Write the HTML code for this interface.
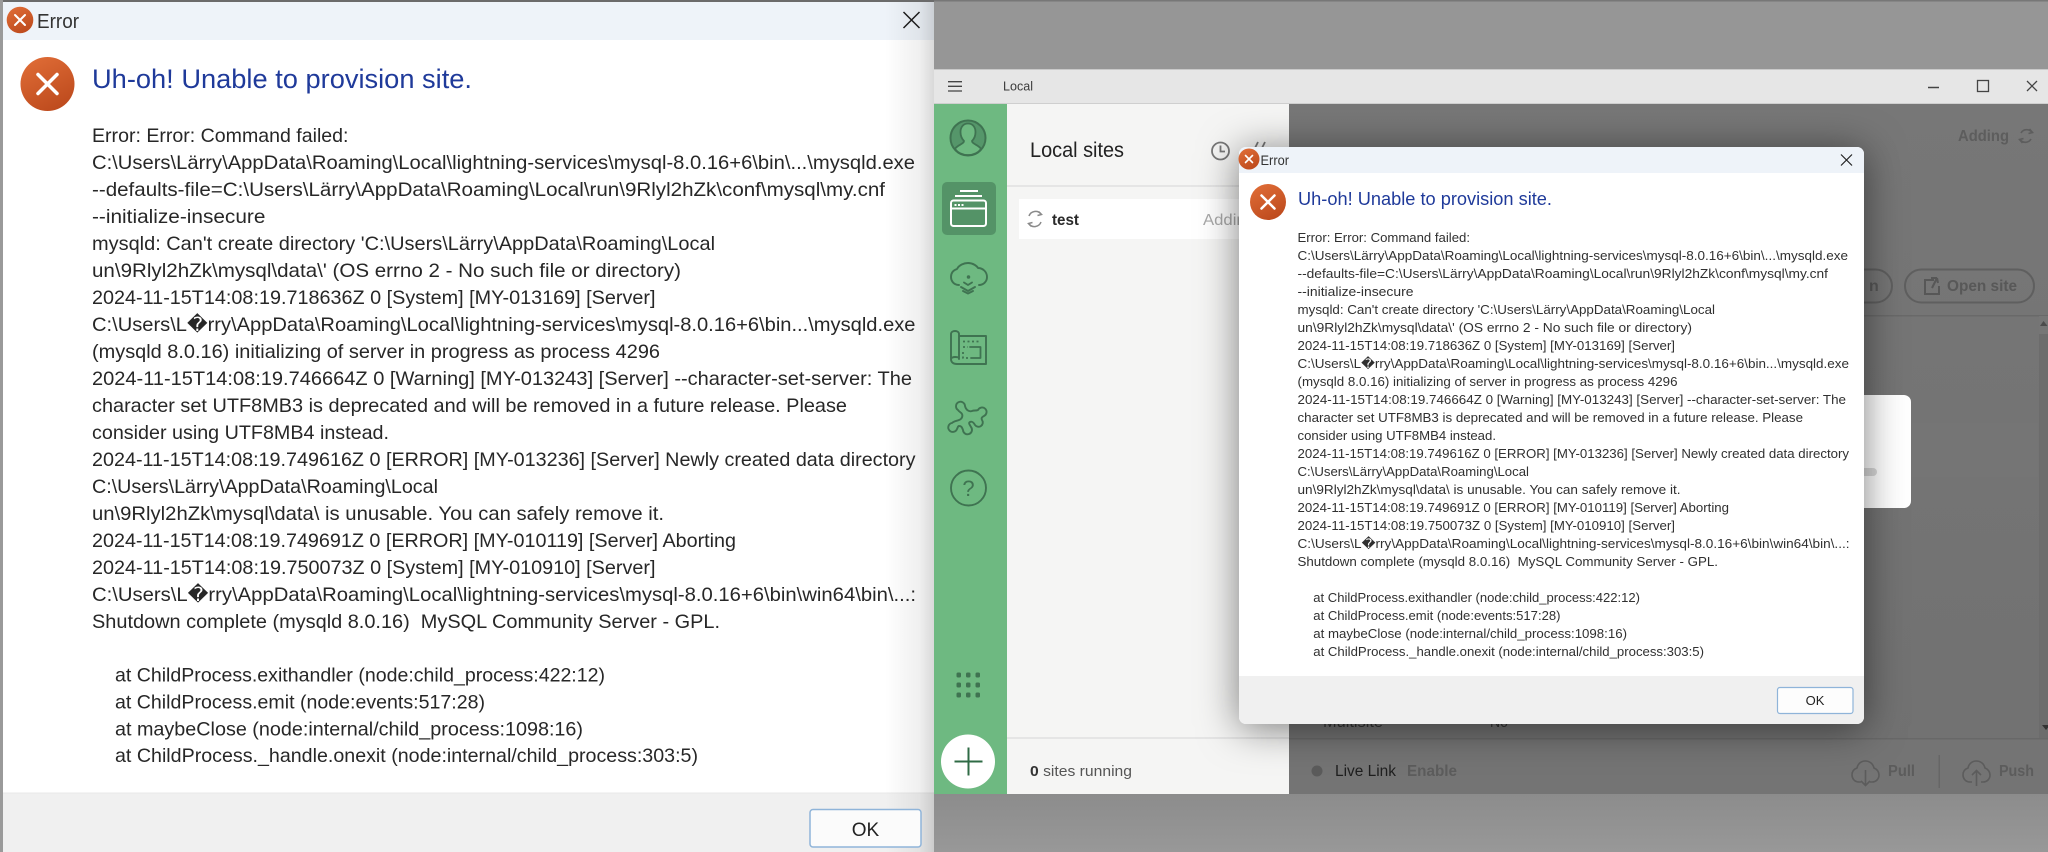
<!DOCTYPE html>
<html lang="en">
<head>
<meta charset="utf-8">
<title>Error</title>
<style>
html,body{margin:0;padding:0;width:2048px;height:852px;overflow:hidden;background:#969696}
svg{display:block;position:absolute;left:0;top:0}
text{font-family:"Liberation Sans","DejaVu Sans",sans-serif;white-space:pre}
.a text{font-size:19.5px;fill:#272727}
.b text{font-size:13px;fill:#303030}
</style>
</head>
<body>
<svg width="2048" height="852" viewBox="0 0 2048 852" xmlns="http://www.w3.org/2000/svg">
<defs>
<linearGradient id="ic" x1="0.2" y1="0" x2="0.7" y2="1"><stop offset="0" stop-color="#df6c36"/><stop offset="1" stop-color="#bd4a1d"/></linearGradient>
<linearGradient id="fade" x1="0" y1="0" x2="1" y2="0"><stop offset="0" stop-color="#000" stop-opacity="0"/><stop offset="0.7" stop-color="#000" stop-opacity="0.06"/><stop offset="1" stop-color="#000" stop-opacity="0.15"/></linearGradient>
<linearGradient id="bg" x1="0" y1="0" x2="0" y2="1"><stop offset="0" stop-color="#8c8c8c"/><stop offset="1" stop-color="#989898"/></linearGradient>
<linearGradient id="pane" x1="0" y1="0" x2="0" y2="1"><stop offset="0" stop-color="#777"/><stop offset="1" stop-color="#717171"/></linearGradient>
</defs>

<!-- Backdrop -->
<rect width="2048" height="852" fill="#969696"/>
<rect x="934" y="0" width="1114" height="1.5" fill="#777"/>
<rect x="934" y="794" width="1114" height="58" fill="url(#bg)"/>

<!-- Local window -->
<rect x="934" y="70" width="1114" height="34" fill="#e6e6e6"/>
<rect x="934" y="69" width="1114" height="1" fill="#c9c9c9"/>
<rect x="934" y="103" width="1114" height="1" fill="#cfcfcf"/>
<g stroke="#444" stroke-width="1.3" fill="none">
<path d="M948 81.7H962M948 86.3H962M948 91H962"/>
<path d="M1928 87.5H1939" stroke-width="1.5"/>
<rect x="1977.5" y="80.5" width="11" height="11"/>
<path d="M2027 81L2037 91M2037 81L2027 91"/>
</g>
<text x="1003" y="90.5" font-size="13" fill="#3a3a3a" textLength="30" lengthAdjust="spacingAndGlyphs">Local</text>

<!-- Main overlay pane -->
<rect x="1289" y="104" width="759" height="690" fill="url(#pane)"/>
<text x="1958" y="141" font-size="15.5" font-weight="700" fill="#5d5d5d" textLength="51" lengthAdjust="spacingAndGlyphs">Adding</text>
<g fill="none" stroke="#5d5d5d" stroke-width="1.6">
<path d="M2021 133A6.5 6.5 0 0 1 2032 132.5M2031 139A6.5 6.5 0 0 1 2020 139.5"/>
<path d="M2029.5 129L2032.5 132.5L2028.5 133.5M2022.5 143L2019.5 139.5L2023.5 138.500"/>
</g>
<rect x="1780" y="269.5" width="112" height="33" rx="16.5" fill="none" stroke="#5f5f5f" stroke-width="2"/>
<text x="1869" y="291" font-size="16" font-weight="700" fill="#575757">n</text>
<rect x="1905" y="269.5" width="129" height="33" rx="16.5" fill="none" stroke="#5f5f5f" stroke-width="2"/>
<g fill="none" stroke="#575757" stroke-width="2"><path d="M1934 280H1925V294H1939V286"/><path d="M1932 288L1937 278M1937 278H1931M1937 278L1938 283"/></g>
<text x="1947" y="291" font-size="16" font-weight="700" fill="#585858" textLength="70" lengthAdjust="spacingAndGlyphs">Open site</text>
<rect x="1289" y="315" width="759" height="1.5" fill="#696969"/>
<rect x="2039" y="316" width="9" height="422" fill="#6c6c6c"/>
<rect x="2039" y="316" width="9" height="18" fill="#767676"/>
<path d="M2043.5 321L2047.5 326H2040Z" fill="#4c4c4c"/>
<rect x="1289" y="423" width="749" height="54" fill="#757575"/>
<rect x="1700" y="395" width="211" height="113" rx="7" fill="#fff"/>
<rect x="1800" y="468" width="77" height="8" rx="4" fill="#dadada"/>
<text x="1323" y="727" font-size="16" fill="#333" textLength="60" lengthAdjust="spacingAndGlyphs">Multisite</text>
<text x="1490" y="727" font-size="16" fill="#333" textLength="18" lengthAdjust="spacingAndGlyphs">No</text>
<path d="M2042 725L2046 730L2048 727.5V725Z" fill="#333"/>
<rect x="1289" y="738" width="759" height="1.5" fill="#686868"/>
<rect x="1289" y="739.5" width="759" height="54.5" fill="#747474"/>
<circle cx="1317" cy="771" r="5.5" fill="#5b5b5b"/>
<text x="1335" y="776" font-size="15.5" fill="#1f1f1f" textLength="61" lengthAdjust="spacingAndGlyphs">Live Link</text>
<text x="1407" y="776" font-size="15.5" font-weight="700" fill="#5c5c5c" textLength="50" lengthAdjust="spacingAndGlyphs">Enable</text>
<g fill="none" stroke="#5c5c5c" stroke-width="1.6">
<path d="M1861 782H1859C1854 782 1852 778 1852 775C1852 771 1854 769 1857 768C1858 763 1862 761 1865 761C1870 761 1873 764 1874 768C1877 769 1879 772 1879 775C1879 779 1876 782 1872 782H1870"/>
<path d="M1865.5 770V785M1861 781L1865.5 785.5L1870 781"/>
<path d="M1972 782H1970C1965 782 1963 778 1963 775C1963 771 1965 769 1968 768C1969 763 1973 761 1976 761C1981 761 1984 764 1985 768C1988 769 1990 772 1990 775C1990 779 1987 782 1983 782H1981"/>
<path d="M1976.5 786V771M1972 775L1976.5 770.5L1981 775"/>
</g>
<text x="1888" y="776" font-size="15.5" font-weight="700" fill="#5c5c5c" textLength="27" lengthAdjust="spacingAndGlyphs">Pull</text>
<rect x="1938.5" y="755" width="1.5" height="33" fill="#666"/>
<text x="1999" y="776" font-size="15.5" font-weight="700" fill="#5c5c5c" textLength="35" lengthAdjust="spacingAndGlyphs">Push</text>

<!-- Sites list -->
<rect x="1007" y="104" width="282" height="690" fill="#f5f5f4"/>
<text x="1030" y="157" font-size="21.5" fill="#222" textLength="94" lengthAdjust="spacingAndGlyphs">Local sites</text>
<g fill="none" stroke="#777" stroke-width="1.8">
<circle cx="1220.5" cy="151" r="8.5"/>
<path d="M1220.5 145.5V151.5H1225"/>
<path d="M1253 152L1258 142M1260 152L1265 142"/>
</g>
<rect x="1007" y="185" width="282" height="2" fill="#e5e5e5"/>
<rect x="1019" y="199" width="240" height="40" fill="#fff"/>
<g fill="none" stroke="#8a8a8a" stroke-width="1.5">
<path d="M1029 216A7 7 0 0 1 1041 214M1041 222A7 7 0 0 1 1029 224"/>
<path d="M1038.5 211.5L1041.5 214.5L1037.5 215.5M1031.5 226.5L1028.5 223.5L1032.5 222.5"/>
</g>
<text x="1052" y="225" font-size="15.5" font-weight="700" fill="#2a2a2a" textLength="27" lengthAdjust="spacingAndGlyphs">test</text>
<text x="1203" y="225" font-size="15.5" fill="#a8a8a8" textLength="52" lengthAdjust="spacingAndGlyphs">Adding</text>
<rect x="1007" y="737" width="282" height="2" fill="#e5e5e5"/>
<text x="1030" y="776" font-size="15" fill="#555" textLength="102" lengthAdjust="spacingAndGlyphs"><tspan font-weight="700" fill="#333">0</tspan> sites running</text>

<!-- Sidebar -->
<rect x="934" y="104" width="73" height="690" fill="#6eb981"/>
<circle cx="968" cy="138" r="17.5" fill="#55966a" stroke="#3f7351" stroke-width="2"/>
<path d="M968 123.5C963 123.5 960.5 127.5 960.5 132C960.5 136 962 139 964 141C964 144 957 145 955 149C958 153 963 155 968 155C973 155 978 153 981 149C979 145 972 144 972 141C974 139 975.5 136 975.5 132C975.5 127.5 973 123.5 968 123.5Z" fill="#6eb981" stroke="#3f7351" stroke-width="1.8"/>
<rect x="942" y="182" width="54" height="53" rx="5" fill="#549367"/>
<g fill="none" stroke="#fff" stroke-width="2">
<path d="M960 191H978M955 196H982"/>
<rect x="951" y="200.5" width="35" height="25.5" rx="2.5"/>
<path d="M951 208.5H986"/>
</g>
<g fill="#fff"><rect x="954.5" y="204" width="2" height="2"/><rect x="958" y="204" width="2" height="2"/><rect x="961.5" y="204" width="2" height="2"/></g>
<g fill="none" stroke="#3f7351" stroke-width="1.9" stroke-linecap="round" stroke-linejoin="round">
<path d="M959 285C953 285 951 280 951 277C951 272 954 270 957 269C959 265 964 263 968 263C973 263 977 266 978 268C983 268 987 272 987 277C987 282 983 285 979 285"/>
<path d="M964 282.5L968 285L972 282.5M961 287L968 291L975 287M963 291L968 293.5L973 291"/>
<circle cx="968.5" cy="277" r="0.8"/>
<path d="M959 336H986V364H957C953 364 951 362 951 359V334C951 332 953 331 955 331C957 331 959 332 959 334V359C959 357 957 357 955 357C953 357 951 358 951 359"/>
<path d="M970 347H980.5V358H971" stroke-width="1.8"/>
<path d="M963 341.5H981M963 347H968M963 352V358H968" stroke-width="1.8" stroke-dasharray="2 2.5" stroke-linecap="butt"/>
<path d="M958 410A4.5 4.5 0 1 1 965 406C966 410 969 412 972 411C974 410 976 411 978 410A4.5 4.5 0 1 1 984 416C982 417 981 418 982 420A4 4 0 1 1 975 425C974 423 972 421 970 422C968 423 970 425 971 427A4.5 4.5 0 1 1 963 430C962 428 962 426 959 426C958 426 958 427 957 429A4.5 4.5 0 1 1 952 423C954 421 957 421 959 420C962 419 963 416 962 414C961 412 959 412 958 410Z"/>
<circle cx="968.5" cy="488" r="17.5"/>
</g>
<text x="968.5" y="496" font-size="22" fill="#3f7351" text-anchor="middle">?</text>
<g fill="#3f7351">
<rect x="956.5" y="672.5" width="4.5" height="5" rx="1.5"/><rect x="966" y="672.5" width="4.5" height="5" rx="1.5"/><rect x="975.5" y="672.5" width="4.5" height="5" rx="1.5"/>
<rect x="956.5" y="682.5" width="4.5" height="5" rx="1.5"/><rect x="966" y="682.5" width="4.5" height="5" rx="1.5"/><rect x="975.5" y="682.5" width="4.5" height="5" rx="1.5"/>
<rect x="956.5" y="692.5" width="4.5" height="5" rx="1.5"/><rect x="966" y="692.5" width="4.5" height="5" rx="1.5"/><rect x="975.5" y="692.5" width="4.5" height="5" rx="1.5"/>
</g>
<circle cx="968" cy="761.5" r="27" fill="#fff"/>
<path d="M968.5 747.5V775.5M954.5 761.5H982.5" stroke="#2f6b45" stroke-width="2" fill="none"/>

<!-- Small dialog -->
<rect x="1239" y="147" width="625" height="577" rx="7" fill="#fff" style="filter:drop-shadow(0 4px 20px rgba(0,0,0,.5))"/>
<path d="M1239 173V154a7 7 0 0 1 7-7H1857a7 7 0 0 1 7 7V173Z" fill="#eef3f9"/>
<path d="M1239 676H1864V717a7 7 0 0 1-7 7H1246a7 7 0 0 1-7-7Z" fill="#f0f0f0"/>
<circle cx="1249" cy="159" r="10.5" fill="url(#ic)"/>
<path d="M1245.5 155.5L1252.5 162.5M1252.5 155.5L1245.5 162.5" stroke="#fff" stroke-width="1.6" stroke-linecap="round"/>
<text x="1260.5" y="165" font-size="13.5" fill="#333" textLength="28.5" lengthAdjust="spacingAndGlyphs">Error</text>
<path d="M1841 154.5L1852 165.5M1852 154.5L1841 165.5" stroke="#222" stroke-width="1.2"/>
<circle cx="1268" cy="202" r="18" fill="url(#ic)"/>
<path d="M1261.5 195.5L1274.5 208.5M1274.5 195.5L1261.5 208.5" stroke="#fff" stroke-width="2.5" stroke-linecap="round"/>
<text x="1298" y="205" font-size="18" fill="#1f3a9a" textLength="254" lengthAdjust="spacingAndGlyphs">Uh-oh! Unable to provision site.</text>
<g class="b">
<text x="1297.5" y="242" textLength="172.5" lengthAdjust="spacingAndGlyphs">Error: Error: Command failed:</text>
<text x="1297.5" y="260" textLength="550.5" lengthAdjust="spacingAndGlyphs">C:\Users\Lärry\AppData\Roaming\Local\lightning-services\mysql-8.0.16+6\bin\...\mysqld.exe</text>
<text x="1297.5" y="278" textLength="530.5" lengthAdjust="spacingAndGlyphs">--defaults-file=C:\Users\Lärry\AppData\Roaming\Local\run\9Rlyl2hZk\conf\mysql\my.cnf</text>
<text x="1297.5" y="296" textLength="116" lengthAdjust="spacingAndGlyphs">--initialize-insecure</text>
<text x="1297.5" y="314" textLength="417.5" lengthAdjust="spacingAndGlyphs">mysqld: Can't create directory 'C:\Users\Lärry\AppData\Roaming\Local</text>
<text x="1297.5" y="332" textLength="394.5" lengthAdjust="spacingAndGlyphs">un\9Rlyl2hZk\mysql\data\' (OS errno 2 - No such file or directory)</text>
<text x="1297.5" y="350" textLength="377.5" lengthAdjust="spacingAndGlyphs">2024-11-15T14:08:19.718636Z 0 [System] [MY-013169] [Server]</text>
<text x="1297.5" y="368" textLength="551.5" lengthAdjust="spacingAndGlyphs">C:\Users\L�rry\AppData\Roaming\Local\lightning-services\mysql-8.0.16+6\bin...\mysqld.exe</text>
<text x="1297.5" y="386" textLength="380" lengthAdjust="spacingAndGlyphs">(mysqld 8.0.16) initializing of server in progress as process 4296</text>
<text x="1297.5" y="404" textLength="548.5" lengthAdjust="spacingAndGlyphs">2024-11-15T14:08:19.746664Z 0 [Warning] [MY-013243] [Server] --character-set-server: The</text>
<text x="1297.5" y="422" textLength="505.5" lengthAdjust="spacingAndGlyphs">character set UTF8MB3 is deprecated and will be removed in a future release. Please</text>
<text x="1297.5" y="440" textLength="198.5" lengthAdjust="spacingAndGlyphs">consider using UTF8MB4 instead.</text>
<text x="1297.5" y="458" textLength="551.5" lengthAdjust="spacingAndGlyphs">2024-11-15T14:08:19.749616Z 0 [ERROR] [MY-013236] [Server] Newly created data directory</text>
<text x="1297.5" y="476" textLength="231.5" lengthAdjust="spacingAndGlyphs">C:\Users\Lärry\AppData\Roaming\Local</text>
<text x="1297.5" y="494" textLength="383" lengthAdjust="spacingAndGlyphs">un\9Rlyl2hZk\mysql\data\ is unusable. You can safely remove it.</text>
<text x="1297.5" y="512" textLength="431.5" lengthAdjust="spacingAndGlyphs">2024-11-15T14:08:19.749691Z 0 [ERROR] [MY-010119] [Server] Aborting</text>
<text x="1297.5" y="530" textLength="377.5" lengthAdjust="spacingAndGlyphs">2024-11-15T14:08:19.750073Z 0 [System] [MY-010910] [Server]</text>
<text x="1297.5" y="548" textLength="552" lengthAdjust="spacingAndGlyphs">C:\Users\L�rry\AppData\Roaming\Local\lightning-services\mysql-8.0.16+6\bin\win64\bin\...:</text>
<text x="1297.5" y="566" textLength="420.5" lengthAdjust="spacingAndGlyphs">Shutdown complete (mysqld 8.0.16)  MySQL Community Server - GPL.</text>
<text x="1313.3" y="602" textLength="326.7" lengthAdjust="spacingAndGlyphs">at ChildProcess.exithandler (node:child_process:422:12)</text>
<text x="1313.3" y="620" textLength="247.2" lengthAdjust="spacingAndGlyphs">at ChildProcess.emit (node:events:517:28)</text>
<text x="1313.3" y="638" textLength="313.7" lengthAdjust="spacingAndGlyphs">at maybeClose (node:internal/child_process:1098:16)</text>
<text x="1313.3" y="656" textLength="390.7" lengthAdjust="spacingAndGlyphs">at ChildProcess._handle.onexit (node:internal/child_process:303:5)</text>
</g>
<rect x="1777.5" y="687.5" width="75.5" height="26" rx="2.5" fill="#fdfdfd" stroke="#8fb4d9" stroke-width="1.2"/>
<text x="1815" y="705" font-size="13" fill="#222" text-anchor="middle">OK</text>

<!-- Large dialog -->
<rect x="0" y="0" width="934" height="852" fill="#fff"/>
<rect x="0" y="0" width="934" height="40" fill="#eef3f9"/>
<rect x="0" y="793" width="934" height="59" fill="#f0f0f0"/>
<rect x="0" y="792.5" width="934" height="1" fill="#e8e8e8"/>
<rect x="885" y="0" width="49" height="852" fill="url(#fade)"/>
<rect x="0" y="0" width="934" height="2" fill="#6b6b6b"/>
<rect x="0" y="0" width="3" height="852" fill="#9a9a9a"/>
<circle cx="20" cy="20" r="13.3" fill="url(#ic)"/>
<path d="M15 15L25 25M25 15L15 25" stroke="#fff" stroke-width="2" stroke-linecap="round"/>
<text x="37" y="28" font-size="20" fill="#333" textLength="42" lengthAdjust="spacingAndGlyphs">Error</text>
<path d="M903.5 12L919.5 28M919.5 12L903.5 28" stroke="#1c1c1c" stroke-width="1.5"/>
<circle cx="47.5" cy="84" r="27" fill="url(#ic)"/>
<path d="M38 74.5L57 93.5M57 74.5L38 93.5" stroke="#fff" stroke-width="3.5" stroke-linecap="round"/>
<text x="92" y="88" font-size="27" fill="#1f3a9a" textLength="380" lengthAdjust="spacingAndGlyphs">Uh-oh! Unable to provision site.</text>
<g class="a">
<text x="92" y="142" textLength="256.5" lengthAdjust="spacingAndGlyphs">Error: Error: Command failed:</text>
<text x="92" y="169" textLength="823" lengthAdjust="spacingAndGlyphs">C:\Users\Lärry\AppData\Roaming\Local\lightning-services\mysql-8.0.16+6\bin\...\mysqld.exe</text>
<text x="92" y="196" textLength="793" lengthAdjust="spacingAndGlyphs">--defaults-file=C:\Users\Lärry\AppData\Roaming\Local\run\9Rlyl2hZk\conf\mysql\my.cnf</text>
<text x="92" y="223" textLength="173.4" lengthAdjust="spacingAndGlyphs">--initialize-insecure</text>
<text x="92" y="250" textLength="623" lengthAdjust="spacingAndGlyphs">mysqld: Can't create directory 'C:\Users\Lärry\AppData\Roaming\Local</text>
<text x="92" y="277" textLength="589" lengthAdjust="spacingAndGlyphs">un\9Rlyl2hZk\mysql\data\' (OS errno 2 - No such file or directory)</text>
<text x="92" y="304" textLength="563.5" lengthAdjust="spacingAndGlyphs">2024-11-15T14:08:19.718636Z 0 [System] [MY-013169] [Server]</text>
<text x="92" y="331" textLength="823.5" lengthAdjust="spacingAndGlyphs">C:\Users\L�rry\AppData\Roaming\Local\lightning-services\mysql-8.0.16+6\bin...\mysqld.exe</text>
<text x="92" y="358" textLength="568" lengthAdjust="spacingAndGlyphs">(mysqld 8.0.16) initializing of server in progress as process 4296</text>
<text x="92" y="385" textLength="820" lengthAdjust="spacingAndGlyphs">2024-11-15T14:08:19.746664Z 0 [Warning] [MY-013243] [Server] --character-set-server: The</text>
<text x="92" y="412" textLength="755" lengthAdjust="spacingAndGlyphs">character set UTF8MB3 is deprecated and will be removed in a future release. Please</text>
<text x="92" y="439" textLength="297" lengthAdjust="spacingAndGlyphs">consider using UTF8MB4 instead.</text>
<text x="92" y="466" textLength="823.5" lengthAdjust="spacingAndGlyphs">2024-11-15T14:08:19.749616Z 0 [ERROR] [MY-013236] [Server] Newly created data directory</text>
<text x="92" y="493" textLength="346" lengthAdjust="spacingAndGlyphs">C:\Users\Lärry\AppData\Roaming\Local</text>
<text x="92" y="520" textLength="572" lengthAdjust="spacingAndGlyphs">un\9Rlyl2hZk\mysql\data\ is unusable. You can safely remove it.</text>
<text x="92" y="547" textLength="644" lengthAdjust="spacingAndGlyphs">2024-11-15T14:08:19.749691Z 0 [ERROR] [MY-010119] [Server] Aborting</text>
<text x="92" y="574" textLength="563.5" lengthAdjust="spacingAndGlyphs">2024-11-15T14:08:19.750073Z 0 [System] [MY-010910] [Server]</text>
<text x="92" y="601" textLength="824" lengthAdjust="spacingAndGlyphs">C:\Users\L�rry\AppData\Roaming\Local\lightning-services\mysql-8.0.16+6\bin\win64\bin\...:</text>
<text x="92" y="628" textLength="628" lengthAdjust="spacingAndGlyphs">Shutdown complete (mysqld 8.0.16)  MySQL Community Server - GPL.</text>
<text x="115" y="681.5" textLength="490" lengthAdjust="spacingAndGlyphs">at ChildProcess.exithandler (node:child_process:422:12)</text>
<text x="115" y="708.5" textLength="370" lengthAdjust="spacingAndGlyphs">at ChildProcess.emit (node:events:517:28)</text>
<text x="115" y="735.5" textLength="468" lengthAdjust="spacingAndGlyphs">at maybeClose (node:internal/child_process:1098:16)</text>
<text x="115" y="762" textLength="583" lengthAdjust="spacingAndGlyphs">at ChildProcess._handle.onexit (node:internal/child_process:303:5)</text>
</g>
<rect x="810" y="809.5" width="111" height="37.5" rx="3" fill="#fbfbfb" stroke="#8fb4d9" stroke-width="1.5"/>
<text x="865.5" y="836" font-size="19" fill="#222" text-anchor="middle">OK</text>
</svg>
</body>
</html>
